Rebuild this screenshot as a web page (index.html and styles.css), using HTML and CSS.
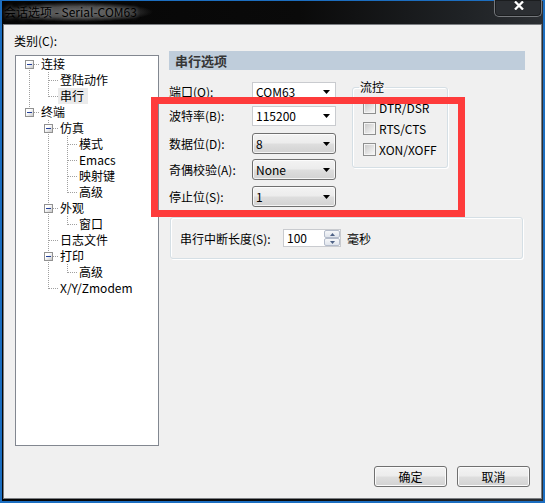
FILE: index.html
```html
<!DOCTYPE html>
<html lang="zh-CN">
<head>
<meta charset="utf-8">
<title>会话选项 - Serial-COM63</title>
<link rel="stylesheet" href="styles.css">
</head>
<body>
<div class="window">
  <div class="titlebar">
    <span class="title">会话选项 - Serial-COM63</span>
    <div class="close">
      <svg width="10" height="9" viewBox="0 0 10 9"><path d="M1 0.5 L9 8.5 M9 0.5 L1 8.5" stroke="#fff" stroke-width="2.3"/></svg>
    </div>
  </div>
  <div class="client">
    <div class="main">
      <div class="left">
        <div class="cat">类别(C):</div>
        <div class="tree">
          <div class="row"><span class="c f"><i class="exp"></i></span><span class="t">连接</span></div>
          <div class="row"><span class="c v"></span><span class="c m"></span><span class="t">登陆动作</span></div>
          <div class="row"><span class="c v"></span><span class="c l"></span><span class="t sel">串行</span></div>
          <div class="row"><span class="c l"><i class="exp"></i></span><span class="t">终端</span></div>
          <div class="row"><span class="c"></span><span class="c m"><i class="exp"></i></span><span class="t">仿真</span></div>
          <div class="row"><span class="c"></span><span class="c v"></span><span class="c m"></span><span class="t">模式</span></div>
          <div class="row"><span class="c"></span><span class="c v"></span><span class="c m"></span><span class="t">Emacs</span></div>
          <div class="row"><span class="c"></span><span class="c v"></span><span class="c m"></span><span class="t">映射键</span></div>
          <div class="row"><span class="c"></span><span class="c v"></span><span class="c l"></span><span class="t">高级</span></div>
          <div class="row"><span class="c"></span><span class="c m"><i class="exp"></i></span><span class="t">外观</span></div>
          <div class="row"><span class="c"></span><span class="c v"></span><span class="c l"></span><span class="t">窗口</span></div>
          <div class="row"><span class="c"></span><span class="c m"></span><span class="t">日志文件</span></div>
          <div class="row"><span class="c"></span><span class="c m"><i class="exp"></i></span><span class="t">打印</span></div>
          <div class="row"><span class="c"></span><span class="c v"></span><span class="c l"></span><span class="t">高级</span></div>
          <div class="row"><span class="c"></span><span class="c l"></span><span class="t">X/Y/Zmodem</span></div>
        </div>
      </div>
      <div class="right">
        <div class="header">串行选项</div>
        <div class="form">
          <div class="fields">
            <div class="frow"><span class="flabel">端口(O):</span><div class="combo edit"><span>COM63</span><svg width="7" height="4" viewBox="0 0 7 4"><path d="M0 0H7L3.5 4Z"/></svg></div></div>
            <div class="frow"><span class="flabel">波特率(B):</span><div class="combo edit"><span>115200</span><svg width="7" height="4" viewBox="0 0 7 4"><path d="M0 0H7L3.5 4Z"/></svg></div></div>
            <div class="frow"><span class="flabel">数据位(D):</span><div class="combo drop"><span>8</span><svg width="7" height="4" viewBox="0 0 7 4"><path d="M0 0H7L3.5 4Z"/></svg></div></div>
            <div class="frow"><span class="flabel">奇偶校验(A):</span><div class="combo drop"><span>None</span><svg width="7" height="4" viewBox="0 0 7 4"><path d="M0 0H7L3.5 4Z"/></svg></div></div>
            <div class="frow"><span class="flabel">停止位(S):</span><div class="combo drop"><span>1</span><svg width="7" height="4" viewBox="0 0 7 4"><path d="M0 0H7L3.5 4Z"/></svg></div></div>
          </div>
          <fieldset class="flow">
            <legend>流控</legend>
            <div class="cb"><span class="box"></span>DTR/DSR</div>
            <div class="cb"><span class="box"></span>RTS/CTS</div>
            <div class="cb"><span class="box"></span>XON/XOFF</div>
          </fieldset>
        </div>
        <div class="break">
          <span class="blabel">串行中断长度(S):</span>
          <div class="spin">
            <span class="val">100</span>
            <div class="spinbtns">
              <span class="sb"><svg width="5" height="3" viewBox="0 0 5 3"><path d="M0 3H5L2.5 0Z"/></svg></span>
              <span class="sb"><svg width="5" height="3" viewBox="0 0 5 3"><path d="M0 0H5L2.5 3Z"/></svg></span>
            </div>
          </div>
          <span class="unit">毫秒</span>
        </div>
      </div>
    </div>
    <div class="buttons">
      <div class="btn">确定</div>
      <div class="btn">取消</div>
    </div>
  </div>
  <div class="mark"></div>
</div>
</body>
</html>
```
FILE: styles.css
```css
html, body {
  margin: 0;
  padding: 0;
  background: #000;
}

.window {
  position: relative;
  box-sizing: border-box;
  width: 545px;
  height: 503px;
  border: 2px solid #1c6ec0;
  border-top-width: 1px;
  padding: 0 1px 2px 1px;
  background: linear-gradient(to right, #050505 0%, #0a0a0a 55%, #1f2225 85%, #2c2f33 100%);
  display: flex;
  flex-direction: column;
  font-family: "Noto Sans CJK SC", sans-serif;
  font-size: 12px;
  color: #000;
}

.titlebar {
  height: 23px;
  flex: none;
  display: flex;
  align-items: flex-start;
}

.title {
  margin-top: 1px;
  padding: 0 16px 0 1px;
  line-height: 20px;
  color: #000;
  background: radial-gradient(farthest-side, rgba(112, 112, 112, 0.9) 0%, rgba(100, 100, 100, 0.75) 55%, rgba(80, 80, 80, 0) 100%);
  text-shadow: 0 0 4px rgba(150, 150, 150, 0.8);
}

.close {
  margin-left: auto;
  margin-top: -1px;
  width: 48px;
  height: 17px;
  box-sizing: border-box;
  border: 1px solid #75787c;
  border-top: none;
  border-radius: 0 0 5px 5px;
  background: #2b2e32;
  box-shadow: inset 0 0 0 1px #1b1d1f;
  display: flex;
  justify-content: center;
  align-items: flex-start;
  padding-top: 1px;
}

.close svg {
  display: block;
  margin-left: 2px;
}

.client {
  flex: 1;
  box-sizing: border-box;
  border: 1px solid #7c7f83;
  background: #f0f0f0;
  display: flex;
  flex-direction: column;
}

.main {
  display: flex;
  height: 421px;
  flex: none;
}

.left {
  margin-left: 10px;
  width: 145px;
}

.cat {
  margin-top: 8px;
  height: 16px;
  line-height: 16px;
}

.tree {
  margin-top: 6px;
  margin-left: 1px;
  width: 144px;
  height: 391px;
  box-sizing: border-box;
  border: 1px solid #828790;
  background: #fff;
  padding-left: 4px;
}

.row {
  display: flex;
  align-items: center;
  height: 16px;
}

.c {
  --dv: repeating-linear-gradient(to bottom, #a0a0a0 0 1px, transparent 1px 2px);
  --dh: repeating-linear-gradient(to right, #a0a0a0 0 1px, transparent 1px 2px);
  flex: none;
  width: 19px;
  height: 16px;
  display: flex;
  align-items: center;
  justify-content: center;
}

.c.v {
  background: var(--dv) 9px 0 / 1px 16px no-repeat;
}

.c.m {
  background: var(--dh) 10px 8px / 9px 1px no-repeat, var(--dv) 9px 0 / 1px 16px no-repeat;
}

.c.l {
  background: var(--dh) 10px 8px / 9px 1px no-repeat, var(--dv) 9px 0 / 1px 9px no-repeat;
}

.c.f {
  background: var(--dh) 10px 8px / 9px 1px no-repeat, var(--dv) 9px 8px / 1px 8px no-repeat;
}

.exp {
  width: 9px;
  height: 9px;
  box-sizing: border-box;
  border: 1px solid #919191;
  background: linear-gradient(135deg, #ffffff 35%, #c9c9c9 100%);
  display: flex;
  align-items: center;
  justify-content: center;
  margin-left: -1px;
}

.exp::before {
  content: "";
  width: 5px;
  height: 1px;
  background: #23409a;
}

.t {
  padding: 0 2px;
  line-height: 16px;
  white-space: nowrap;
}

.t.sel {
  background: #ebebeb;
  padding-right: 4px;
}

.right {
  margin-left: 10px;
  width: 356px;
}

.header {
  margin-top: 26px;
  height: 19px;
  line-height: 19px;
  background: #bfcddb;
  font-size: 13px;
  font-weight: 700;
  color: #363636;
  padding-left: 6px;
}

.form {
  display: flex;
  align-items: flex-start;
}

.fields {
  width: 167px;
  flex: none;
}

.frow {
  display: flex;
  align-items: center;
  height: 21px;
}

.frow:nth-child(1) { margin-top: 11px; }
.frow:nth-child(2) { margin-top: 3px; }
.frow:nth-child(3) { margin-top: 7px; }
.frow:nth-child(4) { margin-top: 5px; }
.frow:nth-child(5) { margin-top: 6px; }

.flabel {
  width: 83px;
  flex: none;
  white-space: nowrap;
}

.combo {
  width: 84px;
  height: 21px;
  box-sizing: border-box;
  display: flex;
  align-items: center;
  justify-content: space-between;
  padding: 0 5px 0 3px;
}

.combo svg {
  display: block;
  fill: #000;
}

.combo.edit {
  height: 20px;
  background: #fff;
  border: 1px solid #c9cbcf;
}

.combo.drop {
  border: 1px solid #707070;
  border-radius: 3px;
  background: linear-gradient(#f3f3f3 0%, #ececec 48%, #dedede 52%, #d2d2d2 100%);
  box-shadow: inset 0 0 0 1px rgba(255, 255, 255, 0.75);
}

.flow {
  margin: 10px 0 0 16px;
  width: 96px;
  min-width: 0;
  box-sizing: border-box;
  border: 1px solid #d5dfe5;
  border-radius: 3px;
  padding: 3px 0 7px 0;
  box-shadow: inset 1px 1px 0 #fff, 1px 1px 0 #fff;
}

.flow legend {
  margin-left: 6px;
  padding: 0 1px;
  line-height: 14px;
}

.cb {
  display: flex;
  align-items: center;
  height: 21px;
  padding-left: 10px;
  white-space: nowrap;
}

.box {
  flex: none;
  width: 13px;
  height: 13px;
  box-sizing: border-box;
  border: 1px solid #8e8f8f;
  padding: 1px;
  background: linear-gradient(135deg, #cbcbcb, #f6f6f6) content-box, #f4f4f4;
  margin-right: 3px;
}

.break {
  margin-top: 10px;
  margin-left: 1px;
  width: 353px;
  height: 42px;
  box-sizing: border-box;
  border: 1px solid #d5dfe5;
  border-radius: 3px;
  box-shadow: inset 1px 1px 0 #fff, 1px 1px 0 #fff;
  display: flex;
  align-items: center;
  padding-left: 9px;
}

.blabel {
  width: 103px;
  flex: none;
  white-space: nowrap;
}

.spin {
  width: 58px;
  height: 18px;
  box-sizing: border-box;
  border: 1px solid #c9cbcf;
  background: #fff;
  display: flex;
}

.val {
  flex: 1;
  padding-left: 3px;
  line-height: 16px;
}

.spinbtns {
  width: 16px;
  display: flex;
  flex-direction: column;
}

.sb {
  flex: 1;
  box-sizing: border-box;
  border: 1px solid #b4bccb;
  border-radius: 2px;
  background: linear-gradient(#f6f7f9, #dfe4ec);
  display: flex;
  align-items: center;
  justify-content: center;
}

.sb svg {
  display: block;
  fill: #4d6185;
}

.unit {
  margin-left: 6px;
}

.buttons {
  display: flex;
  justify-content: flex-end;
  gap: 10px;
  margin-top: 20px;
  padding-right: 11px;
}

.btn {
  width: 73px;
  height: 21px;
  box-sizing: border-box;
  border: 1px solid #707070;
  border-radius: 3px;
  background: linear-gradient(#f3f3f3 0%, #ececec 48%, #dedede 52%, #d2d2d2 100%);
  box-shadow: inset 0 0 0 1px #fbfbfb;
  display: flex;
  align-items: center;
  justify-content: center;
}

.mark {
  position: absolute;
  left: 149px;
  top: 96px;
  width: 314px;
  height: 120px;
  box-sizing: border-box;
  border: 7px solid #fe3b3b;
}
```
